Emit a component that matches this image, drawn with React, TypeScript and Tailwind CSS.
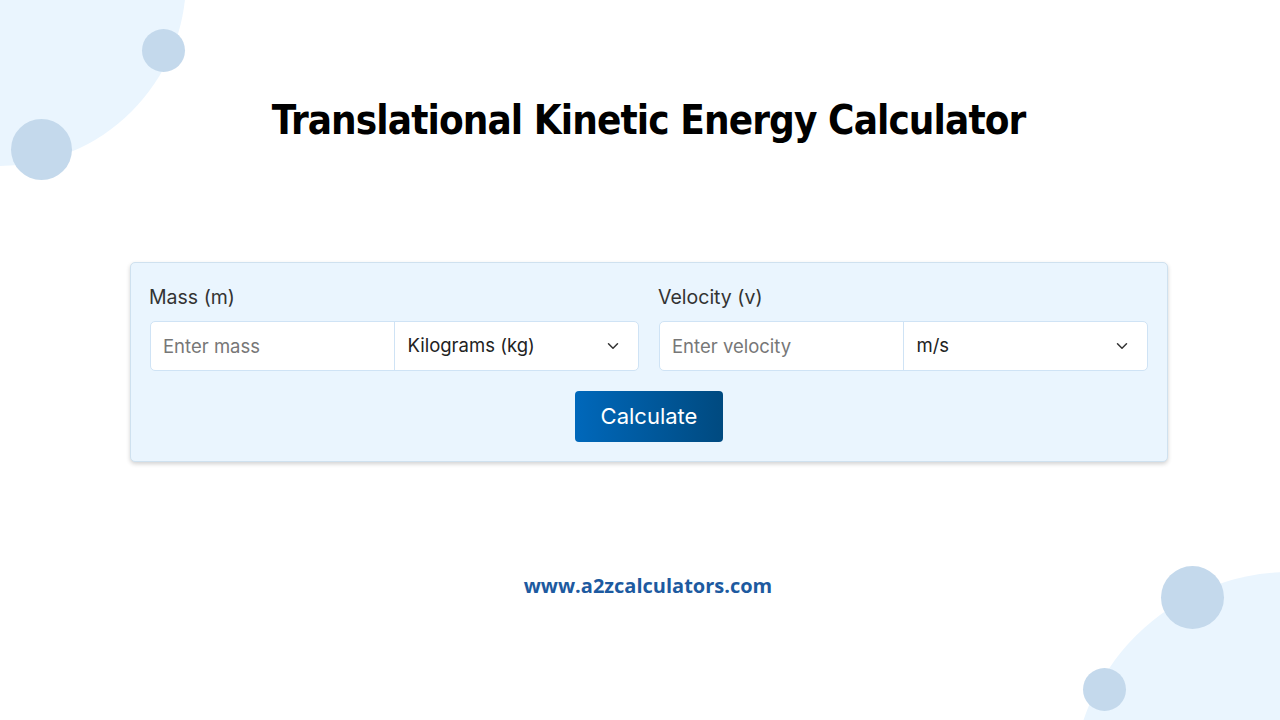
import React from 'react';

const Chevron: React.FC = () => (
    <svg width="18" height="18" viewBox="0 0 24 24" fill="none" stroke="#333" strokeWidth="2" strokeLinecap="round" strokeLinejoin="round">
        <path d="M6 9l6 6 6-6" />
    </svg>
);

const Field: React.FC<{ label: string; placeholder: string; unit: string }> = ({ label, placeholder, unit }) => (
    <div className="flex-1 flex flex-col">
        <label className="text-[19.5px] text-[#333] leading-none mb-[13px] mt-[2px] ml-[-1px]">{label}</label>
        <div className="flex h-[50px] bg-white border border-[#cfe3f5] rounded-[5px]">
            <input
                className="w-1/2 h-full px-[12px] text-[18.5px] text-[#333] placeholder:text-[#777] bg-transparent outline-none border-r border-[#cfe3f5]"
                placeholder={placeholder}
            />
            <div className="w-1/2 h-full flex items-center justify-between pl-[13px] pr-[16px] text-[18.5px] text-[#222]">
                <span>{unit}</span>
                <Chevron />
            </div>
        </div>
    </div>
);

const App: React.FC = () => {
    return (
        <div className="relative w-[1280px] h-[720px] overflow-hidden bg-white" style={{ fontFamily: 'Inter, "Noto Sans", sans-serif' }}>
            {/* decorative circles */}
            <div className="absolute left-[-186px] top-[-206px] w-[372px] h-[372px] rounded-full bg-[#eaf5fe]" />
            <div className="absolute left-[142px] top-[29px] w-[43px] h-[43px] rounded-full bg-[#c4d9ec]" />
            <div className="absolute left-[11px] top-[119px] w-[61px] h-[61px] rounded-full bg-[#c4d9ec]" />
            <div className="absolute left-[1072px] top-[572px] w-[436px] h-[436px] rounded-full bg-[#eaf5fe]" />
            <div className="absolute left-[1161px] top-[566px] w-[63px] h-[63px] rounded-full bg-[#c4d9ec]" />
            <div className="absolute left-[1083px] top-[668px] w-[43px] h-[43px] rounded-full bg-[#c4d9ec]" />

            <div className="relative flex flex-col items-center">
                <h1
                    className="mt-[96px] text-[40px] font-bold text-black leading-[48px] tracking-[-0.9px] ml-[17px]"
                    style={{ fontFamily: '"DejaVu Sans Condensed", "DejaVu Sans", sans-serif' }}
                >
                    Translational Kinetic Energy Calculator
                </h1>

                <div className="mt-[118px] w-[1038px] bg-[#eaf5fe] border border-[#cfe1ef] rounded-[5px] shadow-[0_2px_4px_rgba(0,0,0,0.18)] px-[19px] pt-[23px] pb-[19px] ml-[18px]">
                    <div className="flex gap-[20px]">
                        <Field label="Mass (m)" placeholder="Enter mass" unit="Kilograms (kg)" />
                        <Field label="Velocity (v)" placeholder="Enter velocity" unit="m/s" />
                    </div>
                    <div className="flex justify-center mt-[20px]">
                        <button className="w-[148px] h-[51px] rounded-[4px] text-white text-[22px] bg-gradient-to-r from-[#0068bb] to-[#004a80]">
                            Calculate
                        </button>
                    </div>
                </div>

                <div
                    className="mt-[109px] ml-[16px] text-[20px] font-bold text-[#1d5aa0]"
                    style={{ fontFamily: '"Open Sans", sans-serif' }}
                >
                    www.a2zcalculators.com
                </div>
            </div>
        </div>
    );
};

export default App;
